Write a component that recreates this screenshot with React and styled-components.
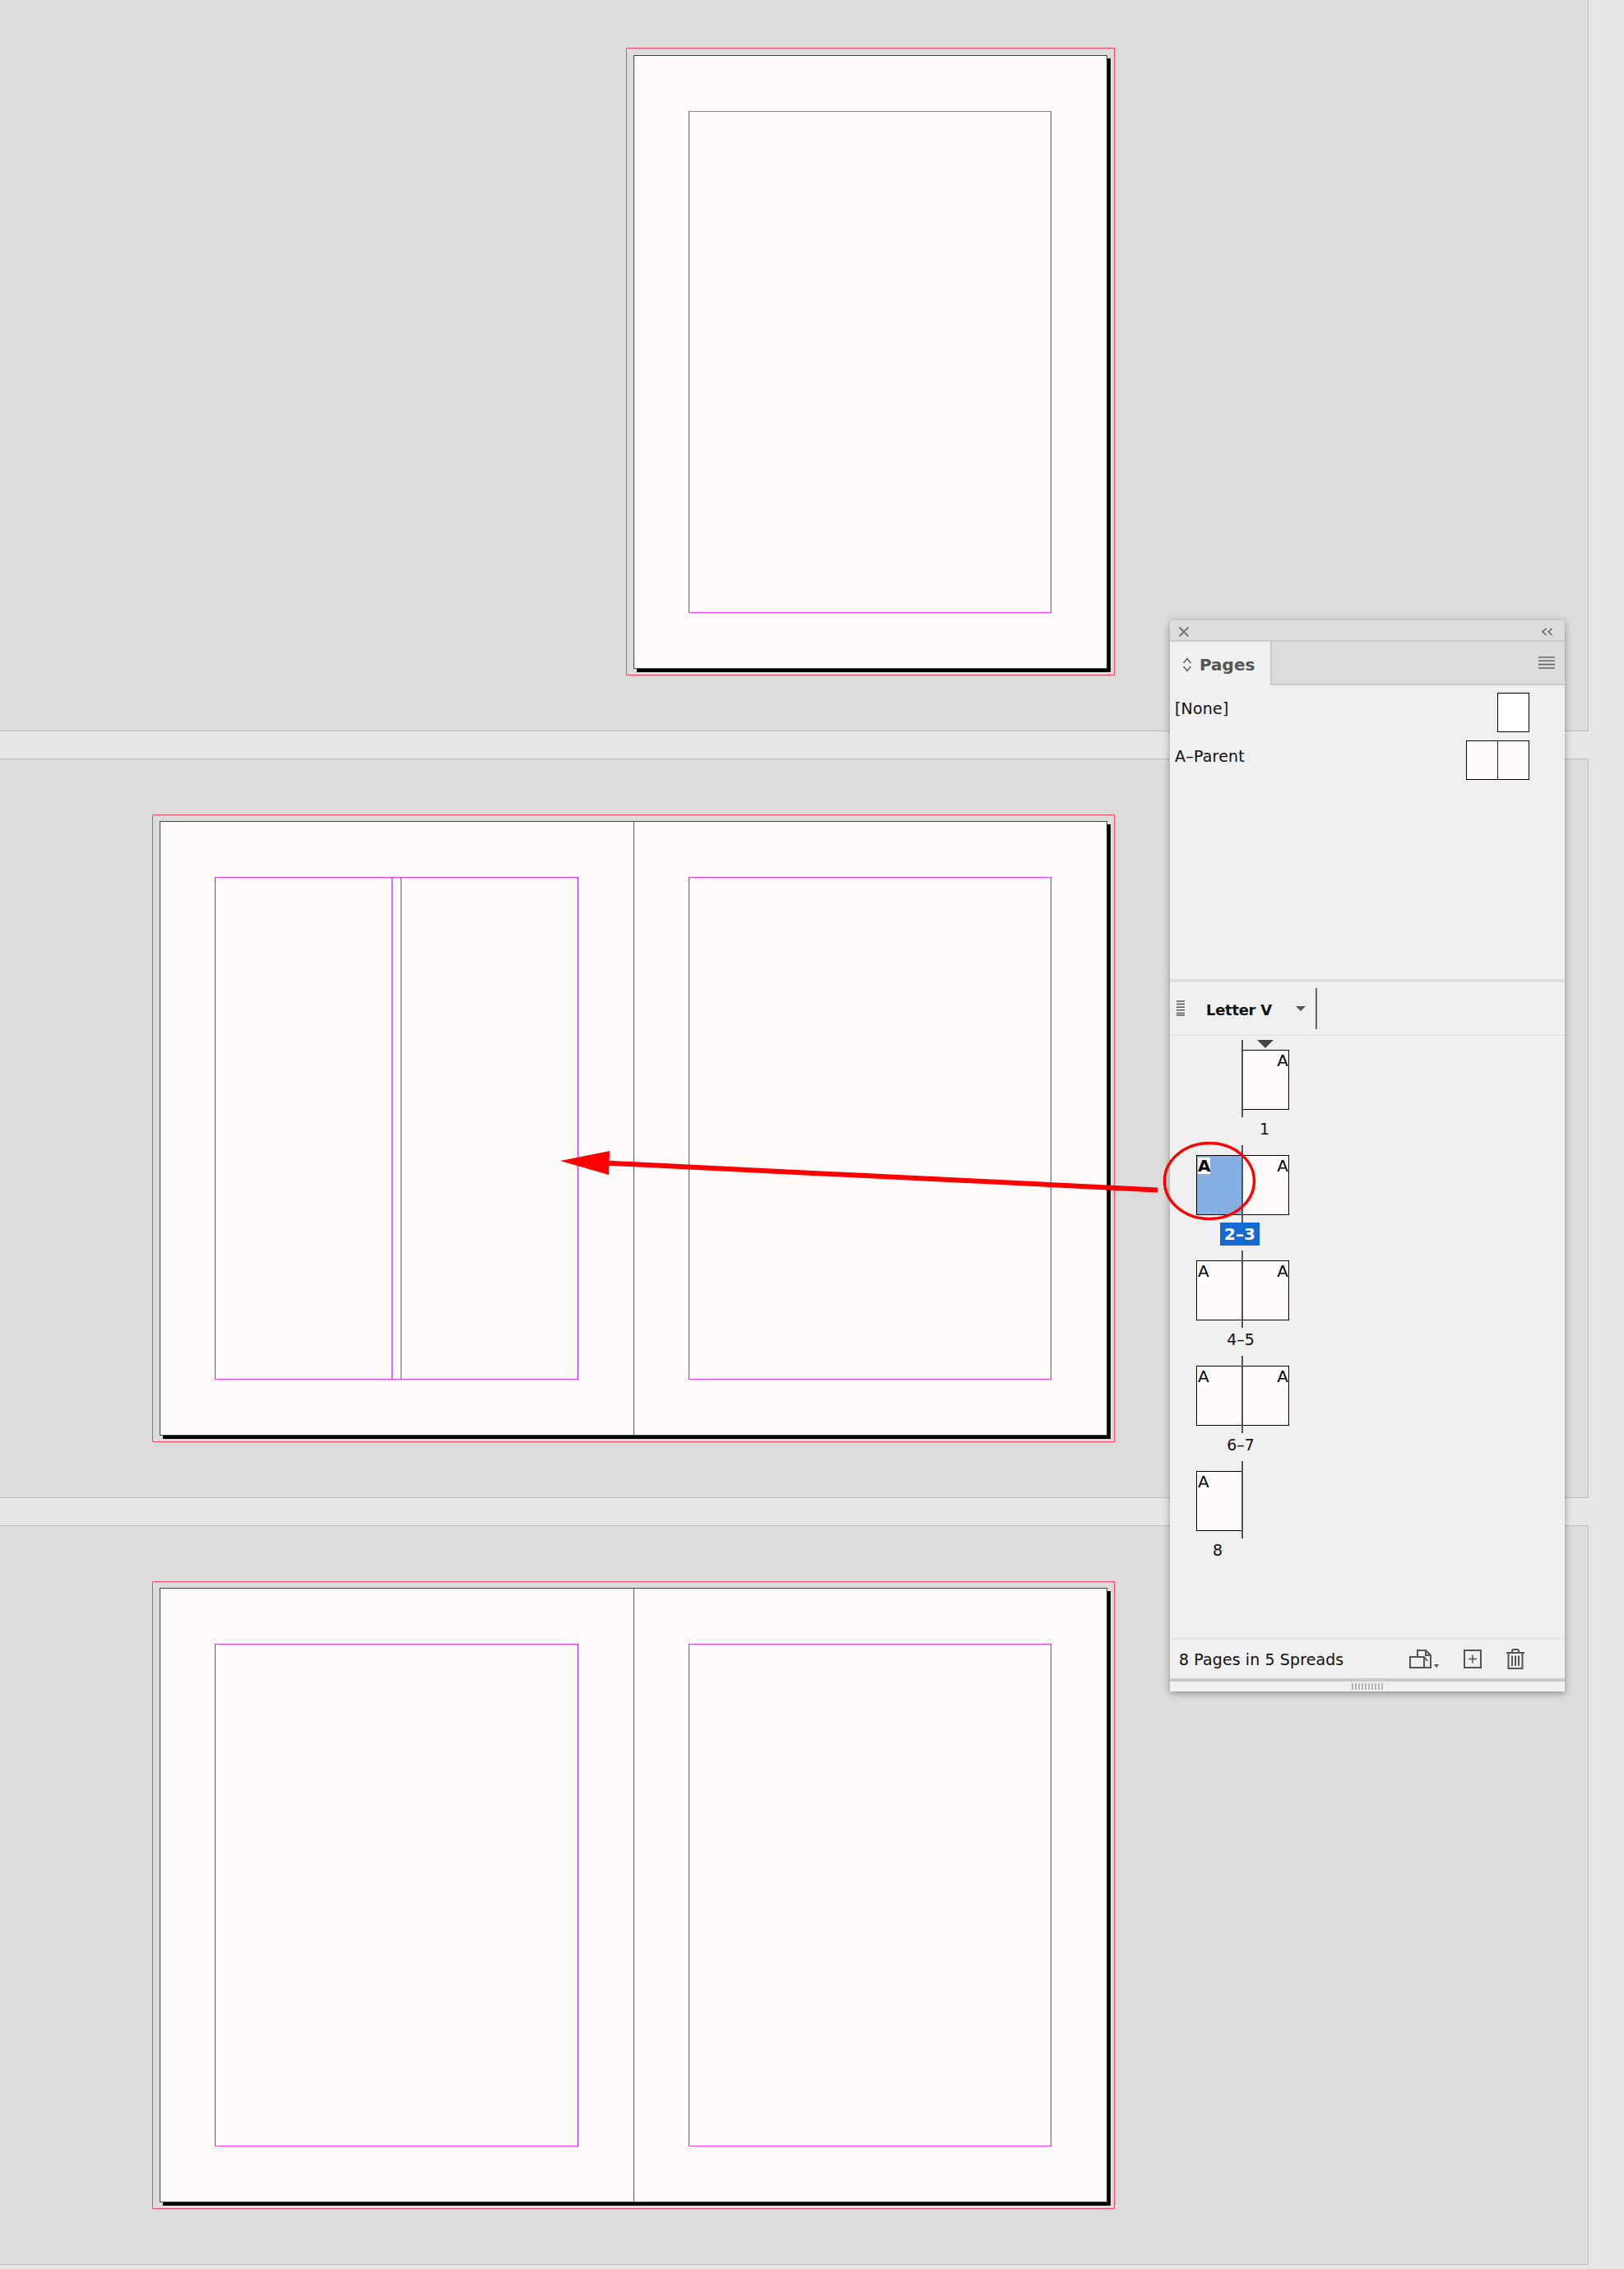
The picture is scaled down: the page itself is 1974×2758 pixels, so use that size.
import styled, { createGlobalStyle } from 'styled-components';

const GlobalStyle = createGlobalStyle`
  html, body {
    margin: 0;
    padding: 0;
    background: #e6e6e6;
  }
`;

const Screen = styled.div`
  position: relative;
  width: 1974px;
  height: 2758px;
  overflow: hidden;
  background: #e6e6e6;
  font-family: "DejaVu Sans", Verdana, sans-serif;
`;

const Pasteboard = styled.div`
  display: flex;
  flex-direction: column;
  gap: 33px;
  width: 1931px;
`;

const SpreadRow = styled.div`
  display: flex;
  justify-content: flex-end;
  box-sizing: border-box;
  height: ${p => p.$height}px;
  padding: ${p => p.$top}px 575px 0 0;
  background: #dcdcdc;
  border: 1px solid #bcbcbc;
  border-width: ${p => (p.$first ? '0' : '1px')} 1px 1px 0;
`;

const Bleed = styled.div`
  display: flex;
  align-self: flex-start;
  padding: ${p => (p.$first ? '8px 8px 7px' : '7px 8px')};
  border: 1px solid #ff4868;
`;

const Spread = styled.div`
  display: flex;
  border: 1px solid #444;
  box-shadow: 4px 4px 0 #000;
  background: #fffbfa;
`;

const Page = styled.div`
  box-sizing: border-box;
  width: ${p => p.$w}px;
  height: ${p => p.$h}px;
  padding: 67px 67px 67px 66px;
  & + & {
    border-left: 1px solid #555;
  }
`;

const Margins = styled.div`
  display: flex;
  justify-content: center;
  box-sizing: border-box;
  height: 100%;
  border-style: solid;
  border-width: 1px;
  border-color: #ff33ff #9b27ff;
`;

const ColumnGutter = styled.div`
  width: 10px;
  height: 100%;
  border-left: 1px solid #9b27ff;
  border-right: 1px solid #9b27ff;
`;

const Panel = styled.div`
  position: absolute;
  left: 1422px;
  top: 754px;
  display: flex;
  flex-direction: column;
  width: 480px;
  height: 1302px;
  background: #f0f0f0;
  border-radius: 5px 5px 0 0;
  box-shadow: 0 2px 9px rgba(0, 0, 0, 0.38);
  overflow: hidden;
`;

const TitleBar = styled.div`
  display: flex;
  align-items: center;
  justify-content: space-between;
  box-sizing: border-box;
  height: 26px;
  padding: 3px 14px 0 10px;
  background: #dcdcdc;
  border-bottom: 2px solid #cacaca;
`;

const TabBar = styled.div`
  display: flex;
  align-items: stretch;
  justify-content: space-between;
  height: 53px;
  background: #dcdcdc;
  border-bottom: 2px solid #cacaca;
  box-sizing: border-box;
  padding-right: 12px;
`;

const Tab = styled.div`
  display: flex;
  align-items: center;
  gap: 9px;
  box-sizing: border-box;
  width: 124px;
  height: 53px;
  padding: 2px 0 0 15px;
  background: #f0f0f0;
  border-right: 2px solid #cacaca;
  color: #555;
  font-size: 20px;
  font-weight: 700;
`;

const ParentList = styled.div`
  display: flex;
  flex-direction: column;
  height: 361px;
  box-sizing: border-box;
  padding-top: 9px;
  border-bottom: 4px solid #dddddd;
`;

const ParentRow = styled.div`
  display: flex;
  align-items: flex-start;
  justify-content: space-between;
  height: 58px;
  padding: 0 43px 0 6px;
  font-size: 19px;
  letter-spacing: 0.2px;
  color: #111;
`;

const ParentLabel = styled.span`
  margin-top: 8px;
`;

const ParentThumb = styled.div`
  display: flex;
  border: 1px solid #000;
  background: ${p => p.$color};
  & > div {
    width: 37px;
    height: 46px;
  }
  & > div + div {
    border-left: 1px solid #222;
  }
`;

const SizeBar = styled.div`
  display: flex;
  align-items: center;
  box-sizing: border-box;
  height: 65px;
  padding: 0 0 0 8px;
  border-bottom: 2px solid #e8e8e8;
`;

const SizeLabel = styled.span`
  margin: 3px 0 0 25px;
  width: 100px;
  font-size: 18px;
  font-weight: 700;
  letter-spacing: -0.3px;
  color: #111;
`;

const Caret = styled.span`
  width: 0;
  height: 0;
  margin-left: 9px;
  border-style: solid;
  border-width: 6px 6.5px 0;
  border-color: #555 transparent transparent;
`;

const SizeDivider = styled.span`
  width: 2px;
  height: 50px;
  margin-left: 12px;
  background: #666;
`;

const ThumbList = styled.div`
  display: flex;
  flex-direction: column;
  flex: 1;
  padding-top: 5px;
`;

const ThumbRow = styled.div`
  display: flex;
  flex-direction: column;
  height: 128px;
`;

const ThumbStage = styled.div`
  position: relative;
  height: 94px;
`;

const Spine = styled.span`
  position: absolute;
  left: 87px;
  top: 0;
  width: 2px;
  height: 94px;
  background: #555;
`;

const Thumb = styled.div`
  position: absolute;
  top: 12px;
  left: ${p => (p.$side === 'right' ? 88 : 32)}px;
  box-sizing: border-box;
  width: ${p => (p.$side === 'both' ? 113 : p.$side === 'right' ? 57 : 56)}px;
  height: 73px;
  border: 1px solid #000;
  background: #fffbfa;
`;

const Selected = styled.div`
  position: absolute;
  inset: 0 auto 0 0;
  width: 55px;
  background: #86b0e4;
`;

const Letter = styled.span`
  position: absolute;
  top: 2px;
  ${p => (p.$right ? 'right: 0;' : 'left: 1px;')}
  background: #fff;
  color: #000;
  font-size: 20px;
  font-weight: ${p => (p.$bold ? 700 : 400)};
  line-height: 20px;
`;

const CurrentMark = styled.span`
  position: absolute;
  left: 106px;
  top: 0;
  width: 0;
  height: 0;
  border-style: solid;
  border-width: 10px 10px 0;
  border-color: #444 transparent transparent;
`;

const PageNumber = styled.span`
  align-self: flex-start;
  height: 28px;
  margin-left: ${p => p.$left}px;
  padding: 0 5px;
  font-size: ${p => (p.$active ? 20 : 19)}px;
  line-height: 28px;
  font-weight: ${p => (p.$active ? 700 : 400)};
  color: ${p => (p.$active ? '#fff' : '#111')};
  background: ${p => (p.$active ? '#1469d2' : 'transparent')};
  transform: translateX(-50%);
`;

const Footer = styled.div`
  display: flex;
  align-items: center;
  box-sizing: border-box;
  height: 53px;
  padding: 0 0 0 11px;
  border-top: 2px solid #e8e8e8;
  border-bottom: 4px solid #cacaca;
  color: #111;
  font-size: 19px;
  letter-spacing: 0.1px;
`;

const FooterLabel = styled.span`
  width: 280px;
`;

const FooterIcons = styled.div`
  display: flex;
  align-items: center;
  gap: 30px;
`;

const Grip = styled.div`
  display: flex;
  align-items: center;
  justify-content: center;
  height: 12px;
`;

const GripMarks = styled.span`
  width: 38px;
  height: 8px;
  background: repeating-linear-gradient(90deg, #b4b4b4 0 2px, transparent 2px 4px);
`;

const Overlay = styled.svg`
  position: absolute;
  inset: 0;
  pointer-events: none;
`;

const CloseIcon = () => (
  <svg width="14" height="14" viewBox="0 0 14 14">
    <path d="M1.500 1.500 12.500 12.500M12.500 1.500 1.500 12.500" stroke="#777" strokeWidth="2" fill="none" />
  </svg>
);

const CollapseIcon = () => (
  <svg width="14" height="10" viewBox="0 0 14 10">
    <path d="M5.500 1 1 5l4.500 4M12.500 1 8 5l4.500 4" stroke="#555" strokeWidth="1.400" fill="none" />
  </svg>
);

const SortIcon = () => (
  <svg width="12" height="18" viewBox="0 0 12 18">
    <path d="M1.500 7 6 1.500 10.500 7M1.500 11 6 16.500 10.500 11" stroke="#666" strokeWidth="1.600" fill="none" />
  </svg>
);

const MenuIcon = () => (
  <svg width="20" height="15" viewBox="0 0 20 15" style={{ alignSelf: 'center' }}>
    <path d="M0 1h20M0 5.300h20M0 9.600h20M0 14h20" stroke="#666" strokeWidth="1.600" fill="none" />
  </svg>
);

const LinesIcon = () => (
  <svg width="11" height="19" viewBox="0 0 11 19">
    <path d="M0 1h10M0 4.600h10M0 8.200h10M0 11.800h10M0 15.400h10M0 18h10" stroke="#555" strokeWidth="1.500" fill="none" />
  </svg>
);

const PageSizeIcon = () => (
  <svg width="36" height="23" viewBox="0 0 36 23">
    <path d="M1 9h17v13H1zM10 9V1h10l6 6v15h-8M20 1v6h6M18 9l4 5" stroke="#555" strokeWidth="2" fill="none" />
    <path d="M30 18h6l-3 4z" fill="#555" />
  </svg>
);

const NewPageIcon = () => (
  <svg width="22" height="23" viewBox="0 0 22 23">
    <rect x="1" y="1" width="20" height="21" stroke="#555" strokeWidth="2" fill="none" />
    <path d="M11 6.500v10M6 11.500h10" stroke="#555" strokeWidth="1.600" fill="none" />
  </svg>
);

const TrashIcon = () => (
  <svg width="22" height="25" viewBox="0 0 22 25">
    <path d="M0 5h22M7 5V2.500a1.500 1.500 0 0 1 1.500-1.500h5a1.500 1.500 0 0 1 1.500 1.500V5M2.500 5v19h17V5M7 8.500V21M11 8.500V21M15 8.500V21" stroke="#555" strokeWidth="2" fill="none" />
  </svg>
);

const spreads = [
  { id: 'r1', height: 889, top: 58, first: true, pageHeight: 744, pages: [{ w: 574 }] },
  { id: 'r2', height: 899, top: 67, pageHeight: 745, pages: [{ w: 575, columns: true }, { w: 575 }] },
  { id: 'r3', height: 899, top: 67, pageHeight: 745, pages: [{ w: 575 }, { w: 575 }] },
];

const thumbs = [
  { id: '1', label: '1', side: 'right', at: 115, letters: ['right'], current: true },
  { id: '2', label: '2–3', side: 'both', at: 85, letters: ['left', 'right'], selected: true },
  { id: '4', label: '4–5', side: 'both', at: 86, letters: ['left', 'right'] },
  { id: '6', label: '6–7', side: 'both', at: 86, letters: ['left', 'right'] },
  { id: '8', label: '8', side: 'left', at: 58, letters: ['left'] },
];

const App = () => (
  <Screen>
    <GlobalStyle />
    <Pasteboard>
      {spreads.map(s => (
        <SpreadRow key={s.id} $height={s.height} $top={s.top} $first={s.first}>
          <Bleed $first={s.first}>
            <Spread>
              {s.pages.map((p, i) => (
                <Page key={i} $w={p.w} $h={s.pageHeight}>
                  <Margins>{p.columns && <ColumnGutter />}</Margins>
                </Page>
              ))}
            </Spread>
          </Bleed>
        </SpreadRow>
      ))}
    </Pasteboard>

    <Panel>
      <TitleBar>
        <CloseIcon />
        <CollapseIcon />
      </TitleBar>
      <TabBar>
        <Tab>
          <SortIcon />
          Pages
        </Tab>
        <MenuIcon />
      </TabBar>
      <ParentList>
        <ParentRow>
          <ParentLabel>[None]</ParentLabel>
          <ParentThumb $color="#fff">
            <div />
          </ParentThumb>
        </ParentRow>
        <ParentRow>
          <ParentLabel>A–Parent</ParentLabel>
          <ParentThumb $color="#fffbfa">
            <div />
            <div />
          </ParentThumb>
        </ParentRow>
      </ParentList>
      <SizeBar>
        <LinesIcon />
        <SizeLabel>Letter V</SizeLabel>
        <Caret />
        <SizeDivider />
      </SizeBar>
      <ThumbList>
        {thumbs.map(t => (
          <ThumbRow key={t.id}>
            <ThumbStage>
              <Thumb $side={t.side}>
                {t.selected && <Selected />}
                {t.letters.map(side => (
                  <Letter key={side} $right={side === 'right'} $bold={t.selected && side === 'left'}>
                    A
                  </Letter>
                ))}
              </Thumb>
              <Spine />
              {t.current && <CurrentMark />}
            </ThumbStage>
            <PageNumber $left={t.at} $active={t.selected}>
              {t.label}
            </PageNumber>
          </ThumbRow>
        ))}
      </ThumbList>
      <Footer>
        <FooterLabel>8 Pages in 5 Spreads</FooterLabel>
        <FooterIcons>
          <PageSizeIcon />
          <NewPageIcon />
          <TrashIcon />
        </FooterIcons>
      </Footer>
      <Grip>
        <GripMarks />
      </Grip>
    </Panel>

    <Overlay width="1974" height="2758" viewBox="0 0 1974 2758">
      <ellipse cx="1470" cy="1435.500" rx="54.500" ry="46" fill="none" stroke="#f00" strokeWidth="3.500" />
      <path d="M1407 1446.500 735 1413.500" stroke="#f00" strokeWidth="6" fill="none" />
      <path d="M681 1411 741 1399 740 1428z" fill="#f00" />
    </Overlay>
  </Screen>
);

export default App;
